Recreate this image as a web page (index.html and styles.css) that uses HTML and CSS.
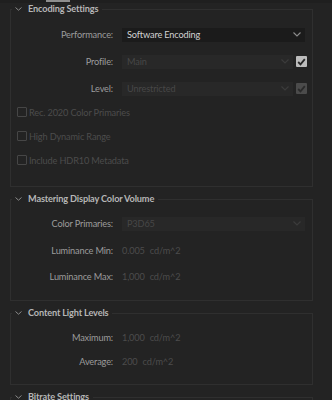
FILE: index.html
```html
<!DOCTYPE html>
<html>
<head>
<meta charset="utf-8">
<link rel="stylesheet" href="styles.css">
</head>
<body>
<div class="top-strip"><span class="tab-stub"></span></div>

<fieldset class="group">
  <legend class="group-head"><svg class="chev" width="7" height="4" viewBox="0 0 7 4"><path d="M0.5 0.5 L3.5 3.2 L6.5 0.5" fill="none" stroke="#8a8a8a" stroke-width="1"/></svg><span>Encoding Settings</span></legend>
  <div class="body enc">
    <div class="row">
      <label class="lbl">Performance:</label>
      <div class="select"><span>Software Encoding</span><svg class="dd" width="8" height="5" viewBox="0 0 8 5"><path d="M0.5 0.5 L4 4 L7.5 0.5" fill="none" stroke="#8c8c8c" stroke-width="1.1"/></svg></div>
    </div>
    <div class="row">
      <label class="lbl">Profile:</label>
      <div class="select disabled short"><span>Main</span><svg class="dd" width="8" height="5" viewBox="0 0 8 5"><path d="M0.5 0.5 L4 4 L7.5 0.5" fill="none" stroke="#3c3c3c" stroke-width="1.1"/></svg></div>
      <span class="cb checked"><svg width="9" height="8" viewBox="0 0 9 8"><path d="M1.2 4 L3.5 6.3 L7.8 1.2" fill="none" stroke="#262626" stroke-width="1.8"/></svg></span>
    </div>
    <div class="row">
      <label class="lbl">Level:</label>
      <div class="select disabled short"><span>Unrestricted</span><svg class="dd" width="8" height="5" viewBox="0 0 8 5"><path d="M0.5 0.5 L4 4 L7.5 0.5" fill="none" stroke="#3c3c3c" stroke-width="1.1"/></svg></div>
      <span class="cb checked off"><svg width="9" height="8" viewBox="0 0 9 8"><path d="M1.2 4 L3.5 6.3 L7.8 1.2" fill="none" stroke="#2a2a2a" stroke-width="1.8"/></svg></span>
    </div>
    <div class="checks">
      <div class="check-row"><span class="cb empty"></span><span class="dim">Rec. 2020 Color Primaries</span></div>
      <div class="check-row"><span class="cb empty"></span><span class="dim">High Dynamic Range</span></div>
      <div class="check-row"><span class="cb empty"></span><span class="dim">Include HDR10 Metadata</span></div>
    </div>
  </div>
</fieldset>

<fieldset class="group">
  <legend class="group-head"><svg class="chev" width="7" height="4" viewBox="0 0 7 4"><path d="M0.5 0.5 L3.5 3.2 L6.5 0.5" fill="none" stroke="#8a8a8a" stroke-width="1"/></svg><span>Mastering Display Color Volume</span></legend>
  <div class="body mast">
    <div class="row">
      <label class="lbl">Color Primaries:</label>
      <div class="select disabled"><span>P3D65</span><svg class="dd" width="8" height="5" viewBox="0 0 8 5"><path d="M0.5 0.5 L4 4 L7.5 0.5" fill="none" stroke="#3c3c3c" stroke-width="1.1"/></svg></div>
    </div>
    <div class="row r26">
      <label class="lbl">Luminance Min:</label>
      <div class="value"><span>0.005</span><span>cd/m^2</span></div>
    </div>
    <div class="row r26">
      <label class="lbl">Luminance Max:</label>
      <div class="value"><span>1,000</span><span>cd/m^2</span></div>
    </div>
  </div>
</fieldset>

<fieldset class="group">
  <legend class="group-head"><svg class="chev" width="7" height="4" viewBox="0 0 7 4"><path d="M0.5 0.5 L3.5 3.2 L6.5 0.5" fill="none" stroke="#8a8a8a" stroke-width="1"/></svg><span>Content Light Levels</span></legend>
  <div class="body cll">
    <div class="row r24">
      <label class="lbl">Maximum:</label>
      <div class="value"><span>1,000</span><span>cd/m^2</span></div>
    </div>
    <div class="row r24">
      <label class="lbl">Average:</label>
      <div class="value"><span>200</span><span>cd/m^2</span></div>
    </div>
  </div>
</fieldset>

<fieldset class="group">
  <legend class="group-head"><svg class="chev" width="7" height="4" viewBox="0 0 7 4"><path d="M0.5 0.5 L3.5 3.2 L6.5 0.5" fill="none" stroke="#8a8a8a" stroke-width="1"/></svg><span>Bitrate Settings</span></legend>
  <div class="body"></div>
</fieldset>
</body>
</html>
```

FILE: styles.css
```css
html, body {
  margin: 0;
  padding: 0;
  background: #232323;
  height: 400px;
  overflow: hidden;
}
body {
  font-family: "Lato", "Open Sans", sans-serif;
  font-size: 9.2px;
  letter-spacing: -0.15px;
  color: #9a9a9a;
}
.top-strip {
  height: 3px;
  background: #1f1f1f;
  display: flex;
}
.tab-stub {
  margin-left: 46px;
  width: 24px;
  height: 2px;
  background: #8e8e8e;
}
.group {
  margin: 0 19px 6px 10px;
  padding: 0;
  border: 1px solid #2f2f2f;
  min-width: 0;
}
.group-head {
  padding: 0 4px 0 3px;
  margin-left: 1px;
  height: 12px;
  line-height: 12px;
  display: flex;
  align-items: center;
  gap: 6px;
  font-weight: bold;
  color: #b6b6b6;
}
.chev { display: block; }
.body.enc { padding: 6px 6px 14px 0; }
.body.mast { padding: 5px 6px 11px 0; }
.body.cll { padding: 6px 6px 11px 0; }
.row {
  height: 27px;
  display: flex;
  align-items: center;
}
.row.r26 { height: 26px; }
.row.r24 { height: 24px; }
.lbl {
  width: 102px;
  text-align: right;
  margin-right: 9px;
  flex: none;
  color: #9c9c9c;
}
.select {
  flex: 1;
  height: 14px;
  margin-right: 1px;
  background: #1b1b1b;
  display: flex;
  align-items: center;
  justify-content: space-between;
  padding: 0 4px 0 5px;
  color: #d2d2d2;
}
.select.disabled {
  background: #282828;
  color: #474747;
}
.select.short { margin-right: 3px; }
.dd { display: block; }
.cb {
  width: 11px;
  height: 11px;
  box-sizing: border-box;
  flex: none;
  display: flex;
  align-items: center;
  justify-content: center;
  margin-right: -1px;
}
.cb.checked {
  background: #bcbcbc;
  border-radius: 1px;
}
.cb.checked.off {
  background: #4b4b4b;
}
.checks {
  margin-top: -2px;
  padding-left: 6px;
}
.check-row {
  height: 24px;
  display: flex;
  align-items: center;
  gap: 3px;
}
.cb.empty {
  width: 10px;
  height: 10px;
  border: 1px solid #464646;
  border-radius: 1px;
}
.dim { color: #4c4c4c; }
.value {
  display: flex;
  gap: 5px;
  color: #4c4c4c;
}
```
